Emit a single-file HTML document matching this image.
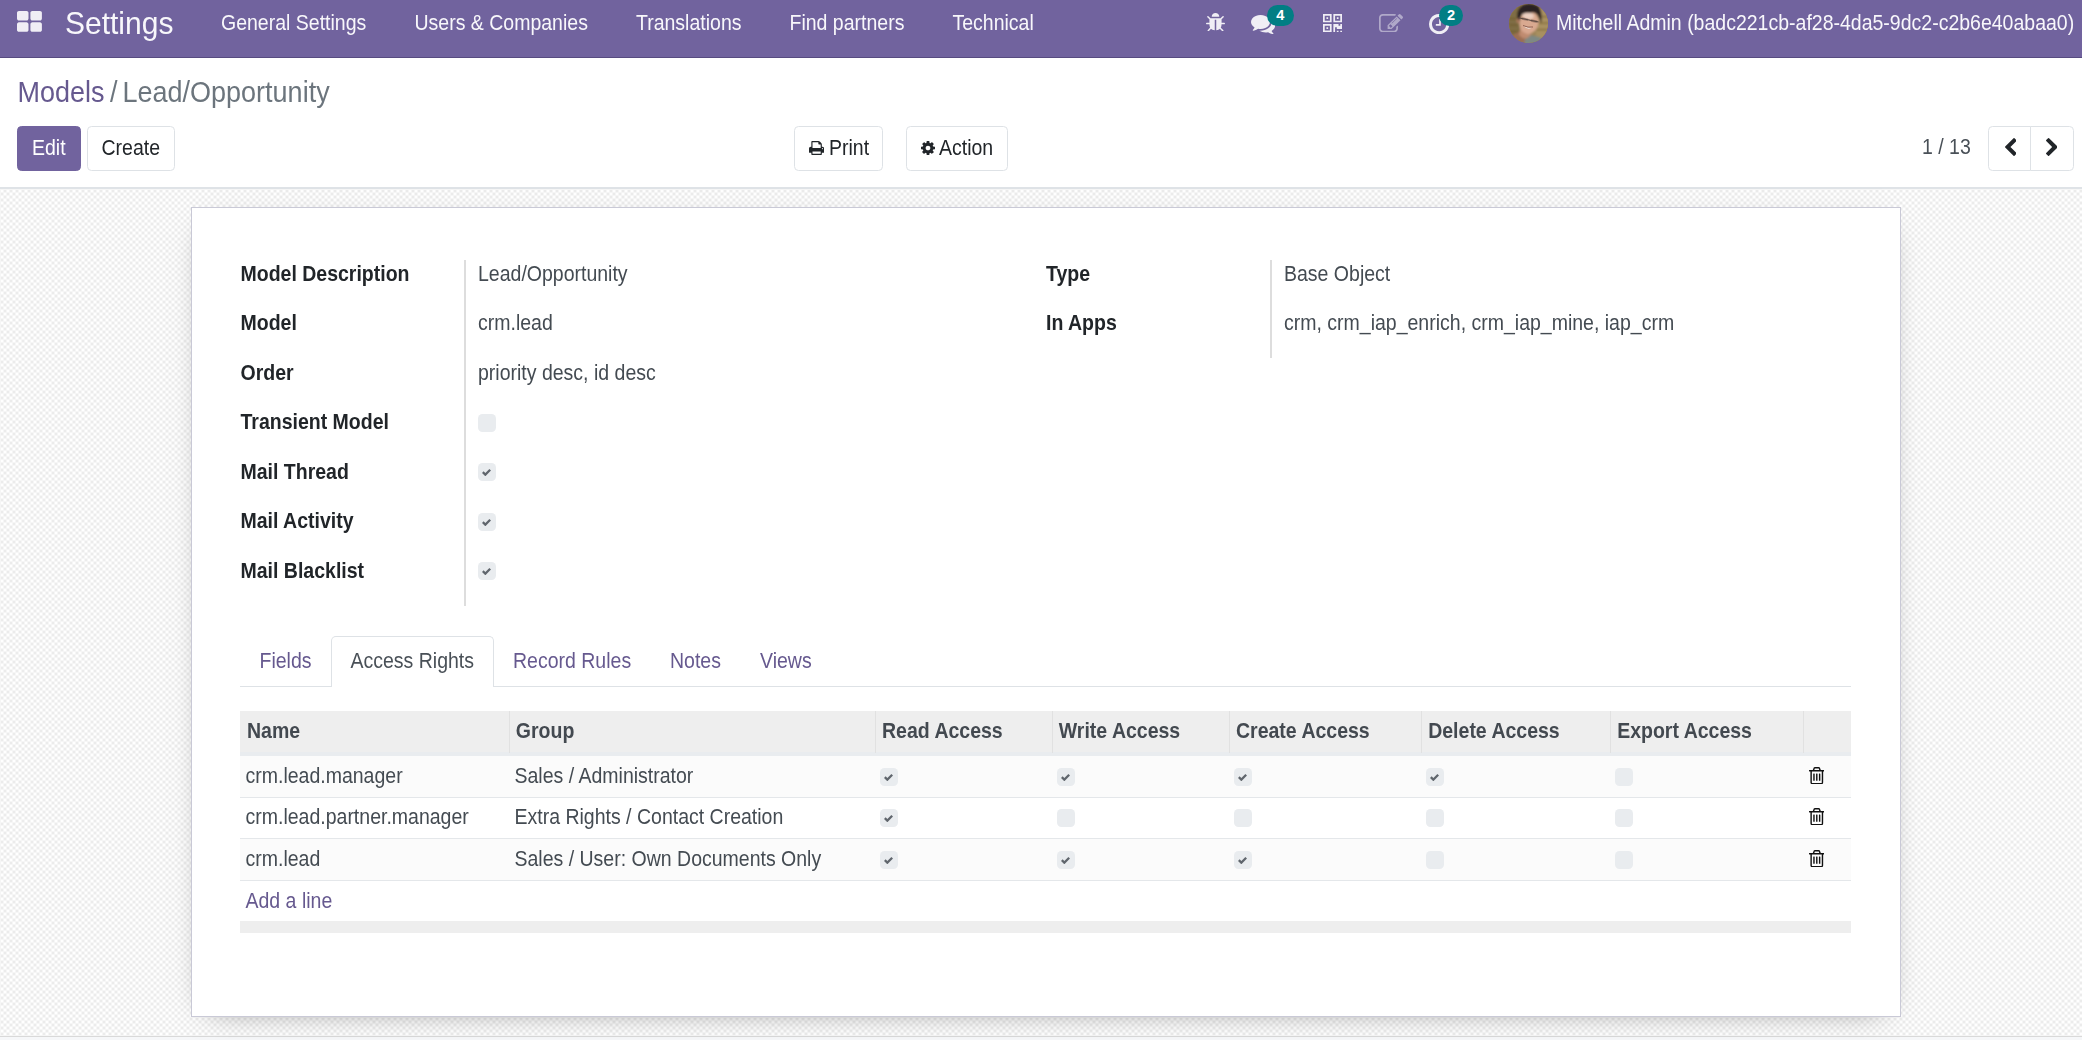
<!DOCTYPE html>
<html lang="en">
<head>
<meta charset="utf-8">
<title>Lead/Opportunity - Odoo</title>
<style>
*{box-sizing:border-box}
html,body{margin:0;padding:0}
body{width:2082px;height:1040px;overflow:hidden;position:relative;
  font-family:"Liberation Sans",Arial,Helvetica,sans-serif;font-size:19.5px;line-height:29.25px;color:#495057;
  background:#fff}
a{text-decoration:none;color:#66598f}
.abs{position:absolute}
svg{display:block;position:absolute}

/* ---------- background ---------- */
#content{position:absolute;left:0;top:189px;width:2082px;height:847px;
  background:repeating-conic-gradient(#ececec 0% 25%,#ffffff 0% 50%) 0.5px 0.5px/6px 6px}
#belowline{position:absolute;left:0;top:1036px;width:2082px;height:1px;background:#d9d9d9}
#below{position:absolute;left:0;top:1037px;width:2082px;height:3px;background:#f6f7f9}

/* ---------- navbar ---------- */
#nav{position:absolute;left:0;top:0;width:2082px;height:58px;background:#71639e;border-bottom:1px solid #574b80;color:#f0eef5}
#nav .t{position:absolute;white-space:nowrap;color:#f8f7fb}
#brand{left:65px;top:3px;font-size:30px;line-height:42px}
.mi{top:9px;line-height:29.25px}
.badge{position:absolute;background:#017e84;color:#fff;font-weight:bold;font-size:14.6px;line-height:21px;height:21px;border-radius:10.5px;text-align:center}
#avatar{position:absolute;left:1509px;top:4px;width:39px;height:39px;border-radius:50%;overflow:hidden;background:#8a6a3c}

/* ---------- control panel ---------- */
#cp{position:absolute;left:0;top:58px;width:2082px;height:131px;background:#fff;border-bottom:2px solid #dfe3e7}
#bc{position:absolute;left:17.5px;top:15px;font-size:27px;line-height:40px;white-space:nowrap;color:#6c757d}
#bc a{color:#66598f}
#bc .sl{position:absolute;left:92.5px;top:0}
#bc .cur{position:absolute;left:105px;top:0}
#pager{left:1922px;top:74.5px;white-space:nowrap;color:#495057}
.btn{position:absolute;top:68px;height:45px;border-radius:4.5px;line-height:43px;white-space:nowrap;color:#212529;border:1px solid #dee2e6;background:#fff}
.btn span{position:absolute;top:0}
#edit{left:17px;width:64px;background:#71639e;border-color:#71639e;color:#fff}

/* ---------- sheet ---------- */
#sheet{position:absolute;left:191px;top:207px;width:1710px;height:810px;background:#fff;border:1px solid #c9c9d6;box-shadow:0 7px 30px -19px rgba(0,0,0,.62)}
.lbl{position:absolute;font-weight:bold;color:#212529;white-space:nowrap}
.val{position:absolute;color:#444b52;white-space:nowrap}
.vsep{position:absolute;width:2px;background:#dddddd}
.cb{position:absolute;width:18px;height:18px;border-radius:4.5px;background:#e9ecef}
.cb svg{left:3.8px;top:5.5px}
.tab{position:absolute;top:646.5px;white-space:nowrap;color:#66598f}
#tabline{position:absolute;left:240px;top:686px;width:1611px;height:1px;background:#dee2e6}
#tabact{position:absolute;left:331px;top:636px;width:163px;height:51px;border:1px solid #dee2e6;border-bottom:0;border-radius:5px 5px 0 0;background:#fff}
#thead{position:absolute;left:240px;top:711px;width:1611px;height:45px;background:#eeeeee;border-bottom:4px solid #e9ecef}
.th{position:absolute;top:716.5px;font-weight:bold;color:#434950;white-space:nowrap}
.csep{position:absolute;top:711px;width:1px;height:42px;background:#e1e1e1}
.row{position:absolute;left:240px;width:1611px;border-bottom:1px solid #e4e7ea}
.td{position:absolute;white-space:nowrap;color:#444b52}
#tfoot{position:absolute;left:240px;top:921px;width:1611px;height:12px;background:#eeeeee}

/* emulate hinted (taller) glyph rendering of the reference */
.lbl,.val,.tab,.th,.td,.mi,#pager{transform:scaleY(1.085);transform-origin:0 21.4px}
.btn span{transform:scaleY(1.085);transform-origin:0 28.3px}
#bc{transform:scaleY(1.06);transform-origin:0 29.4px}
#brand{transform:scaleY(1.06);transform-origin:0 31.4px}
</style>
</head>
<body>

<div id="content"></div>
<div id="belowline"></div>
<div id="below"></div>

<!-- NAVBAR -->
<div id="nav">
<svg style="left:16.9px;top:11px" width="24.9" height="20.8" viewBox="64 128 1664 1408" preserveAspectRatio="none"><path fill="#f0eef5" d="M832 1024v384q0 52-38 90t-90 38h-512q-52 0-90-38t-38-90v-384q0-52 38-90t90-38h512q52 0 90 38t38 90zm0-768v384q0 52-38 90t-90 38h-512q-52 0-90-38t-38-90v-384q0-52 38-90t90-38h512q52 0 90 38t38 90zm896 768v384q0 52-38 90t-90 38h-512q-52 0-90-38t-38-90v-384q0-52 38-90t90-38h512q52 0 90 38t38 90zm0-768v384q0 52-38 90t-90 38h-512q-52 0-90-38t-38-90v-384q0-52 38-90t90-38h512q52 0 90 38t38 90z"/></svg>
<div id="brand" class="t">Settings</div>
<div class="t mi" style="left:221px">General Settings</div>
<div class="t mi" style="left:414.5px">Users &amp; Companies</div>
<div class="t mi" style="left:636px">Translations</div>
<div class="t mi" style="left:789.5px">Find partners</div>
<div class="t mi" style="left:952.5px">Technical</div>
<svg style="left:1206.2px;top:12.8px" width="19" height="18.4" viewBox="96 64 1600 1568" preserveAspectRatio="none"><path fill="#f0eef5" d="M1696 960q0 26-19 45t-45 19h-224q0 171-67 290l208 209q19 19 19 45t-19 45q-18 19-45 19t-45-19l-198-197q-5 5-15 13t-42 28.500-65 36.500-82 29-97 13v-896h-128v896q-51 0-101.500-13.500t-87-33-66-39-43.500-32.500l-15-14-183 207q-20 21-48 21-24 0-43-16-19-18-20.500-44.500t15.500-46.500l202-227q-58-114-58-274h-224q-26 0-45-19t-19-45 19-45 45-19h224v-294l-173-173q-19-19-19-45t19-45 45-19 45 19l173 173h844l173-173q19-19 45-19t45 19 19 45-19 45l-173 173v294h224q26 0 45 19t19 45zm-480-576h-640q0-133 93.500-226.500t226.500-93.500 226.500 93.500 93.500 226.500z"/></svg>
<svg style="left:1251px;top:15px" width="24.2" height="19.2" viewBox="0 256 1792 1408" preserveAspectRatio="none"><path fill="#f0eef5" d="M1408 768q0 139-94 257t-256.500 186.500-353.500 68.500q-86 0-176-16-124 88-278 128-36 9-86 16h-3q-11 0-20.500-8t-11.500-21q-1-3-1-6.500t.5-6.500 2-6l2.500-5 3.500-5.500 4-5 4.500-5 4-4.500q5-6 23-25t26-29.500 22.500-29 25-38.500 20.500-44q-124-72-195-177t-71-224q0-139 94-257t256.500-186.500 353.500-68.500 353.500 68.500 256.500 186.500 94 257zm384 256q0 120-71 224.500t-195 176.500q10 24 20.500 44t25 38.500 22.500 29 26 29.500 23 25q1 1 4 4.500t4.500 5 4 5 3.500 5.500l2.500 5 2 6 .5 6.500-1 6.500q-3 14-13 22t-22 7q-50-7-86-16-154-40-278-128-90 16-176 16-271 0-472-132 58 4 88 4 161 0 309-45t264-129q125-92 192-212t67-254q0-77-23-152 129 71 204 178t75 230z"/></svg>
<div class="badge" style="left:1267px;top:5.3px;width:26.8px">4</div>
<svg style="left:1322.8px;top:13.9px" width="19" height="18.3" viewBox="192 128 1408 1408" preserveAspectRatio="none"><path fill="#f0eef5" d="M576 1152v128h-128v-128h128zm0-768v128h-128v-128h128zm768 0v128h-128v-128h128zm-1024 1023h384v-383h-384v383zm0-767h384v-384h-384v384zm768 0h384v-384h-384v384zm-256 256v640h-640v-640h640zm512 512v128h-128v-128h128zm256 0v128h-128v-128h128zm0-512v384h-384v-128h-128v384h-128v-640h384v128h128v-128h128zm-768-768v640h-640v-640h640zm768 0v640h-640v-640h640z"/></svg>
<svg style="left:1379px;top:13.9px;opacity:.5" width="24" height="18.3" viewBox="0 128 1784 1408" preserveAspectRatio="none"><path fill="#f0eef5" d="M888 1184l116-116-152-152-116 116v56h96v96h56zm440-720q-16-16-33 1l-350 350q-17 17-1 33t33-1l350-350q17-17 1-33zm80 594v190q0 119-84.500 203.500t-203.500 84.500h-832q-119 0-203.500-84.500t-84.500-203.500v-832q0-119 84.500-203.500t203.500-84.500h832q63 0 117 25 15 7 18 23 3 17-9 29l-49 49q-14 14-32 8-23-6-45-6h-832q-66 0-113 47t-47 113v832q0 66 47 113t113 47h832q66 0 113-47t47-113v-126q0-13 9-22l64-64q15-15 35-7t20 29zm-96-738l288 288-672 672h-288v-288zm444 132l-92 92-288-288 92-92q28-28 68-28t68 28l152 152q28 28 28 68t-28 68z"/></svg>
<svg style="left:1429px;top:13.7px" width="20.3" height="20.2" viewBox="128 128 1536 1536" preserveAspectRatio="none"><path fill="#f0eef5" d="M1024 544v448q0 14-9 23t-23 9h-320q-14 0-23-9t-9-23v-64q0-14 9-23t23-9h224v-352q0-14 9-23t23-9h64q14 0 23 9t9 23zm416 352q0-148-73-273t-198-198-273-73-273 73-198 198-73 273 73 273 198 198 273 73 273-73 198-198 73-273zm224 0q0 209-103 385.500t-279.500 279.500-385.500 103-385.500-103-279.500-279.500-103-385.500 103-385.500 279.500-279.500 385.500-103 385.500 103 279.500 279.500 103 385.500z"/></svg>
<div class="badge" style="left:1439px;top:5px;width:24.2px">2</div>
<div id="avatar"><svg style="left:0;top:0" width="39" height="39" viewBox="0 0 39 39">
<defs><filter id="bl" x="-20%" y="-20%" width="140%" height="140%"><feGaussianBlur stdDeviation="0.9"/></filter>
<filter id="bl2" x="-20%" y="-20%" width="140%" height="140%"><feGaussianBlur stdDeviation="0.5"/></filter></defs>
<rect width="39" height="39" fill="#9c8458"/>
<g filter="url(#bl)">
<rect x="-2" y="-2" width="14" height="43" fill="#7f6d44"/>
<rect x="27" y="4" width="14" height="30" fill="#a89060"/>
<rect x="28" y="12" width="12" height="1.200" fill="#7c6630"/><rect x="28" y="18.500" width="12" height="1.200" fill="#7c6630"/><rect x="27" y="25" width="12" height="1.200" fill="#7c6630"/>
<rect x="0" y="14" width="9" height="1.200" fill="#6f5c2c"/><rect x="0" y="20.500" width="9" height="1.200" fill="#6f5c2c"/><rect x="0" y="27" width="9" height="1.200" fill="#6f5c2c"/>
<path d="M2 39 L4 31 Q9 27 14 27.500 L18 39Z" fill="#9c6e52"/>
<path d="M15 40 L17 30.500 L26 32 Q32 33 35 36 L36 41 Z" fill="#7e8984"/>
<path d="M10 31 Q12 24 11 18 L25 20 Q24 28 20 33 Q15 37 10 31Z" fill="#c08b70"/>
<ellipse cx="20" cy="18.500" rx="9.500" ry="11.500" transform="rotate(12 20 18.500)" fill="#d9a990"/>
<ellipse cx="19" cy="11.500" rx="6" ry="3.500" transform="rotate(12 19 11.500)" fill="#ecd0c2"/>
<path d="M8.500 17 Q6.500 6 13 1.500 Q21 -2 29 2 Q34 7 32 19.500 Q30 13 28.500 11 Q25 7.500 21 9 Q16 8 13 10.500 Q11 13 10.800 17Z" fill="#2b2320"/>
<path d="M7.500 17.500 Q7 14.500 9.500 14 L10.500 19 Q8.500 20 7.500 17.500Z" fill="#b07a5e"/>
</g>
<g filter="url(#bl2)">
<path d="M9.500 13.800 L29.500 18" stroke="#54443f" stroke-width="1.100" fill="none"/>
<path d="M13 14.500 L19 15.800 M22 16.500 L28 17.700" stroke="#6a5148" stroke-width="2.400" fill="none" opacity=".5"/>
<path d="M14.500 21.800 Q19 24.500 23.500 23.300 Q19 26.800 14.500 21.800Z" fill="#f3ebe6"/>
<path d="M14 21.500 Q19 24 24 23" stroke="#7a4a3c" stroke-width=".8" fill="none"/>
</g>
</svg></div>
<div class="t mi" style="left:1556px">Mitchell Admin (badc221cb-af28-4da5-9dc2-c2b6e40abaa0)</div>
</div>
<!-- CONTROL PANEL -->
<div id="cp">
<div id="bc"><a>Models</a><span class="sl">/</span><span class="cur">Lead/Opportunity</span></div>
<div class="btn" id="edit"><span style="left:14px">Edit</span></div>
<div class="btn" style="left:87px;width:88px"><span style="left:13.5px">Create</span></div>
<div class="btn" style="left:794px;width:89px"><svg style="left:14px;top:14px" width="15.2" height="14" viewBox="64 128 1664 1536" preserveAspectRatio="none"><path fill="#212529" d="M448 1536h896v-256h-896v256zm0-640h896v-384h-160q-40 0-68-28t-28-68v-160h-640v640zm1152 64q0-26-19-45t-45-19-45 19-19 45 19 45 45 19 45-19 19-45zm128 0v416q0 13-9.500 22.500t-22.500 9.500h-224v160q0 40-28 68t-68 28h-960q-40 0-68-28t-28-68v-160h-224q-13 0-22.500-9.500t-9.500-22.500v-416q0-79 56.500-135.500t135.500-56.500h64v-544q0-40 28-68t68-28h672q40 0 88 20t76 48l152 152q28 28 48 76t20 88v256h64q79 0 135.500 56.500t56.500 135.500z"/></svg><span style="left:34px">Print</span></div>
<div class="btn" style="left:906px;width:102px"><svg style="left:14px;top:14px" width="14" height="14" viewBox="128 128 1536 1536" preserveAspectRatio="none"><path fill="#212529" d="M1152 896q0-106-75-181t-181-75-181 75-75 181 75 181 181 75 181-75 75-181zm512-109v222q0 12-8 23t-20 13l-185 28q-19 54-39 91 35 50 107 138 10 12 10 25t-9 23q-27 37-99 108t-94 71q-12 0-26-9l-138-108q-44 23-91 38-16 136-29 186-7 28-36 28h-222q-14 0-24.500-8.500t-11.500-21.500l-28-184q-49-16-90-37l-141 107q-10 9-25 9-14 0-25-11-126-114-165-168-7-10-7-23 0-12 8-23 15-21 51-66.500t54-70.500q-27-50-41-99l-183-27q-13-2-21-12.500t-8-23.500v-222q0-12 8-23t19-13l186-28q14-46 39-92-40-57-107-138-10-12-10-24 0-10 9-23 26-36 98.500-107.500t94.500-71.500q13 0 26 10l138 107q44-23 91-38 16-136 29-186 7-28 36-28h222q14 0 24.500 8.500t11.500 21.500l28 184q49 16 90 37l142-107q9-9 24-9 13 0 25 10 129 119 165 170 7 8 7 22 0 12-8 23-15 21-51 66.500t-54 70.500q26 50 41 98l183 28q13 2 21 12.500t8 23.500z"/></svg><span style="left:32px">Action</span></div>
<div class="abs" id="pager">1 / 13</div>
<div class="btn" style="left:1988px;width:43px;border-radius:4.5px 0 0 4.5px"><svg style="left:15.7px;top:11.1px" width="11.6" height="18" viewBox="410 26 1036 1612" preserveAspectRatio="none"><path fill="#212529" d="M1427 301l-531 531 531 531q19 19 19 45t-19 45l-166 166q-19 19-45 19t-45-19l-742-742q-19-19-19-45t19-45l742-742q19-19 45-19t45 19l166 166q19 19 19 45t-19 45z"/></svg></div>
<div class="btn" style="left:2030px;width:44px;border-radius:0 4.5px 4.5px 0"><svg style="left:14.7px;top:11.1px" width="11.6" height="18" viewBox="346 26 1036 1612" preserveAspectRatio="none"><path fill="#212529" d="M1363 877l-742 742q-19 19-45 19t-45-19l-166-166q-19-19-19-45t19-45l531-531-531-531q-19-19-19-45t19-45l166-166q19-19 45-19t45 19l742 742q19 19 19 45t-19 45z"/></svg></div>
</div>

<!-- SHEET-BEGIN -->
<div id="sheet"></div>
<div class="lbl" style="left:240.5px;top:260px">Model Description</div>
<div class="val" style="left:478px;top:260px">Lead/Opportunity</div>
<div class="lbl" style="left:240.5px;top:308.5px">Model</div>
<div class="val" style="left:478px;top:308.5px">crm.lead</div>
<div class="lbl" style="left:240.5px;top:359px">Order</div>
<div class="val" style="left:478px;top:359px">priority desc, id desc</div>
<div class="lbl" style="left:240.5px;top:407.5px">Transient Model</div>
<div class="lbl" style="left:240.5px;top:458px">Mail Thread</div>
<div class="lbl" style="left:240.5px;top:506.5px">Mail Activity</div>
<div class="lbl" style="left:240.5px;top:557px">Mail Blacklist</div>
<div class="cb" style="left:478px;top:414px"></div>
<div class="cb" style="left:478px;top:463px"><svg width="9" height="7.3" viewBox="0 0 8 6.5"><path fill="#60666d" d="M6.564 0L2.974 3.612 1.436 2.062 0 3.51 2.974 6.5 8 1.443z"/></svg></div>
<div class="cb" style="left:478px;top:513px"><svg width="9" height="7.3" viewBox="0 0 8 6.5"><path fill="#60666d" d="M6.564 0L2.974 3.612 1.436 2.062 0 3.51 2.974 6.5 8 1.443z"/></svg></div>
<div class="cb" style="left:478px;top:562px"><svg width="9" height="7.3" viewBox="0 0 8 6.5"><path fill="#60666d" d="M6.564 0L2.974 3.612 1.436 2.062 0 3.51 2.974 6.5 8 1.443z"/></svg></div>
<div class="vsep" style="left:464px;top:260px;height:346px"></div>
<div class="lbl" style="left:1046px;top:260px">Type</div>
<div class="val" style="left:1284px;top:260px">Base Object</div>
<div class="lbl" style="left:1046px;top:308.5px">In Apps</div>
<div class="val" style="left:1284px;top:308.5px">crm, crm_iap_enrich, crm_iap_mine, iap_crm</div>
<div class="vsep" style="left:1270px;top:260px;height:98px"></div>
<div id="tabline"></div><div id="tabact"></div>
<div class="tab" style="left:259.5px">Fields</div>
<div class="tab" style="left:350.5px;color:#495057">Access Rights</div>
<div class="tab" style="left:513px">Record Rules</div>
<div class="tab" style="left:670px">Notes</div>
<div class="tab" style="left:760px">Views</div>
<div id="thead"></div>
<div class="th" style="left:247px">Name</div>
<div class="csep" style="left:509px"></div>
<div class="th" style="left:515.8px">Group</div>
<div class="csep" style="left:875px"></div>
<div class="th" style="left:882px">Read Access</div>
<div class="csep" style="left:1052px"></div>
<div class="th" style="left:1058.8px">Write Access</div>
<div class="csep" style="left:1229px"></div>
<div class="th" style="left:1236px">Create Access</div>
<div class="csep" style="left:1421px"></div>
<div class="th" style="left:1428.2px">Delete Access</div>
<div class="csep" style="left:1610px"></div>
<div class="th" style="left:1617.2px">Export Access</div>
<div class="csep" style="left:1803px"></div>
<div class="row" style="top:756px;height:42px;background:#fbfbfb"></div>
<div class="td" style="left:245.5px;top:761.5px">crm.lead.manager</div>
<div class="td" style="left:514.5px;top:761.5px">Sales / Administrator</div>
<div class="cb" style="left:880px;top:768px"><svg width="9" height="7.3" viewBox="0 0 8 6.5"><path fill="#60666d" d="M6.564 0L2.974 3.612 1.436 2.062 0 3.51 2.974 6.5 8 1.443z"/></svg></div>
<div class="cb" style="left:1057px;top:768px"><svg width="9" height="7.3" viewBox="0 0 8 6.5"><path fill="#60666d" d="M6.564 0L2.974 3.612 1.436 2.062 0 3.51 2.974 6.5 8 1.443z"/></svg></div>
<div class="cb" style="left:1234px;top:768px"><svg width="9" height="7.3" viewBox="0 0 8 6.5"><path fill="#60666d" d="M6.564 0L2.974 3.612 1.436 2.062 0 3.51 2.974 6.5 8 1.443z"/></svg></div>
<div class="cb" style="left:1426px;top:768px"><svg width="9" height="7.3" viewBox="0 0 8 6.5"><path fill="#60666d" d="M6.564 0L2.974 3.612 1.436 2.062 0 3.51 2.974 6.5 8 1.443z"/></svg></div>
<div class="cb" style="left:1615px;top:768px"></div>
<svg style="left:1808.5px;top:766.5px" width="15.6" height="17.5" viewBox="0 192 1408 1536" preserveAspectRatio="none"><path fill="#111" d="M512 800v576q0 14-9 23t-23 9h-64q-14 0-23-9t-9-23v-576q0-14 9-23t23-9h64q14 0 23 9t9 23zm256 0v576q0 14-9 23t-23 9h-64q-14 0-23-9t-9-23v-576q0-14 9-23t23-9h64q14 0 23 9t9 23zm256 0v576q0 14-9 23t-23 9h-64q-14 0-23-9t-9-23v-576q0-14 9-23t23-9h64q14 0 23 9t9 23zm128 724v-948h-896v948q0 22 7 40.500t14.500 27 10.500 8.500h832q3 0 10.500-8.500t14.500-27 7-40.500zm-672-1076h448l-48-117q-7-9-17-11h-317q-10 2-17 11zm928 32v64q0 14-9 23t-23 9h-96v948q0 83-47 143.500t-113 60.500h-832q-66 0-113-58.500t-47-141.500v-952h-96q-14 0-23-9t-9-23v-64q0-14 9-23t23-9h309l70-167q15-37 54-63t79-26h320q40 0 79 26t54 63l70 167h309q14 0 23 9t9 23z"/></svg>
<div class="row" style="top:798px;height:41px;background:#fff"></div>
<div class="td" style="left:245.5px;top:802.5px">crm.lead.partner.manager</div>
<div class="td" style="left:514.5px;top:802.5px">Extra Rights / Contact Creation</div>
<div class="cb" style="left:880px;top:809px"><svg width="9" height="7.3" viewBox="0 0 8 6.5"><path fill="#60666d" d="M6.564 0L2.974 3.612 1.436 2.062 0 3.51 2.974 6.5 8 1.443z"/></svg></div>
<div class="cb" style="left:1057px;top:809px"></div>
<div class="cb" style="left:1234px;top:809px"></div>
<div class="cb" style="left:1426px;top:809px"></div>
<div class="cb" style="left:1615px;top:809px"></div>
<svg style="left:1808.5px;top:807.5px" width="15.6" height="17.5" viewBox="0 192 1408 1536" preserveAspectRatio="none"><path fill="#111" d="M512 800v576q0 14-9 23t-23 9h-64q-14 0-23-9t-9-23v-576q0-14 9-23t23-9h64q14 0 23 9t9 23zm256 0v576q0 14-9 23t-23 9h-64q-14 0-23-9t-9-23v-576q0-14 9-23t23-9h64q14 0 23 9t9 23zm256 0v576q0 14-9 23t-23 9h-64q-14 0-23-9t-9-23v-576q0-14 9-23t23-9h64q14 0 23 9t9 23zm128 724v-948h-896v948q0 22 7 40.500t14.500 27 10.500 8.500h832q3 0 10.500-8.500t14.500-27 7-40.500zm-672-1076h448l-48-117q-7-9-17-11h-317q-10 2-17 11zm928 32v64q0 14-9 23t-23 9h-96v948q0 83-47 143.500t-113 60.500h-832q-66 0-113-58.500t-47-141.500v-952h-96q-14 0-23-9t-9-23v-64q0-14 9-23t23-9h309l70-167q15-37 54-63t79-26h320q40 0 79 26t54 63l70 167h309q14 0 23 9t9 23z"/></svg>
<div class="row" style="top:839px;height:42px;background:#fbfbfb"></div>
<div class="td" style="left:245.5px;top:844.5px">crm.lead</div>
<div class="td" style="left:514.5px;top:844.5px">Sales / User: Own Documents Only</div>
<div class="cb" style="left:880px;top:851px"><svg width="9" height="7.3" viewBox="0 0 8 6.5"><path fill="#60666d" d="M6.564 0L2.974 3.612 1.436 2.062 0 3.51 2.974 6.5 8 1.443z"/></svg></div>
<div class="cb" style="left:1057px;top:851px"><svg width="9" height="7.3" viewBox="0 0 8 6.5"><path fill="#60666d" d="M6.564 0L2.974 3.612 1.436 2.062 0 3.51 2.974 6.5 8 1.443z"/></svg></div>
<div class="cb" style="left:1234px;top:851px"><svg width="9" height="7.3" viewBox="0 0 8 6.5"><path fill="#60666d" d="M6.564 0L2.974 3.612 1.436 2.062 0 3.51 2.974 6.5 8 1.443z"/></svg></div>
<div class="cb" style="left:1426px;top:851px"></div>
<div class="cb" style="left:1615px;top:851px"></div>
<svg style="left:1808.5px;top:849.5px" width="15.6" height="17.5" viewBox="0 192 1408 1536" preserveAspectRatio="none"><path fill="#111" d="M512 800v576q0 14-9 23t-23 9h-64q-14 0-23-9t-9-23v-576q0-14 9-23t23-9h64q14 0 23 9t9 23zm256 0v576q0 14-9 23t-23 9h-64q-14 0-23-9t-9-23v-576q0-14 9-23t23-9h64q14 0 23 9t9 23zm256 0v576q0 14-9 23t-23 9h-64q-14 0-23-9t-9-23v-576q0-14 9-23t23-9h64q14 0 23 9t9 23zm128 724v-948h-896v948q0 22 7 40.500t14.500 27 10.500 8.500h832q3 0 10.500-8.500t14.500-27 7-40.500zm-672-1076h448l-48-117q-7-9-17-11h-317q-10 2-17 11zm928 32v64q0 14-9 23t-23 9h-96v948q0 83-47 143.500t-113 60.500h-832q-66 0-113-58.500t-47-141.500v-952h-96q-14 0-23-9t-9-23v-64q0-14 9-23t23-9h309l70-167q15-37 54-63t79-26h320q40 0 79 26t54 63l70 167h309q14 0 23 9t9 23z"/></svg>
<div class="td" style="left:245.5px;top:887px"><a>Add a line</a></div>
<div id="tfoot"></div>
<!-- SHEET-END -->
</body>
</html>
